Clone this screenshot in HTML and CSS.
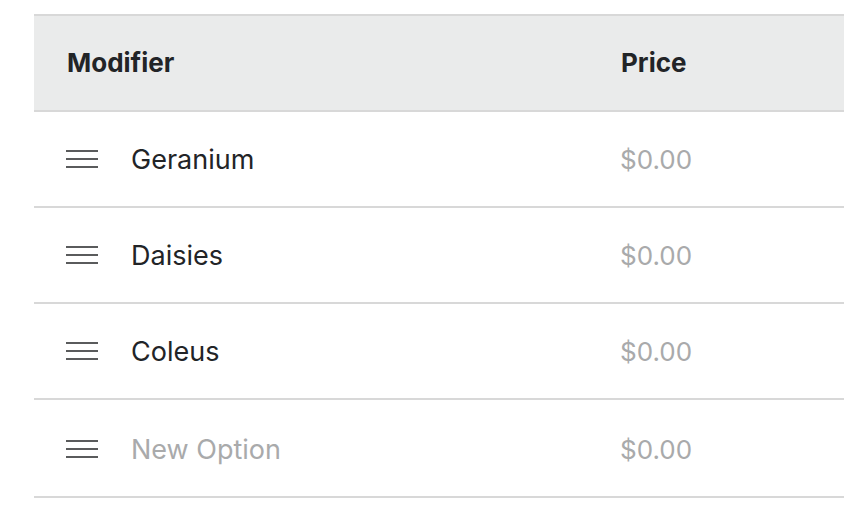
FILE: index.html
```html
<!DOCTYPE html>
<html>
<head>
<meta charset="utf-8">
<link rel="stylesheet" href="styles.css">
</head>
<body>
<div class="table">
  <div class="row head">
    <div class="cell name-h">Modifier</div>
    <div class="cell price-h">Price</div>
  </div>
  <div class="row">
    <div class="cell name"><span class="grip"><i></i><i></i><i></i></span><span class="label">Geranium</span></div>
    <div class="cell price">$0.00</div>
  </div>
  <div class="row">
    <div class="cell name"><span class="grip"><i></i><i></i><i></i></span><span class="label">Daisies</span></div>
    <div class="cell price">$0.00</div>
  </div>
  <div class="row">
    <div class="cell name"><span class="grip"><i></i><i></i><i></i></span><span class="label">Coleus</span></div>
    <div class="cell price">$0.00</div>
  </div>
  <div class="row last">
    <div class="cell name"><span class="grip"><i></i><i></i><i></i></span><span class="label placeholder">New Option</span></div>
    <div class="cell price">$0.00</div>
  </div>
</div>
</body>
</html>
```
FILE: styles.css
```css
html, body {
  margin: 0;
  padding: 0;
  background: #ffffff;
}
body {
  font-family: Inter, "Liberation Sans", sans-serif;
  color: #222427;
}
.table {
  margin: 14px 0 0 34px;
  border-top: 2px solid #d8d8d8;
}
.row {
  display: grid;
  grid-template-columns: 586px 1fr;
  height: 94px;
  border-bottom: 2px solid #d8d8d8;
  align-items: center;
}
.row.head {
  height: 94px;
  background: #eaebeb;
}
.row.last {
  height: 96px;
}
.cell {
  font-size: 26px;
  line-height: 30px;
}
.row:not(.head) .cell {
  padding-top: 2px;
}
.row.last .cell {
  padding-top: 4px;
}
.name-h, .price-h {
  font-weight: 700;
}
.name-h {
  padding-left: 33px;
}
.price-h {
  padding-left: 1px;
}
.name {
  display: flex;
  align-items: center;
  padding-left: 32px;
}
.label {
  font-size: 27px;
}
.grip {
  display: flex;
  flex-direction: column;
  gap: 6px;
  width: 32px;
  margin-right: 33px;
  margin-top: -2px;
}
.grip i {
  display: block;
  height: 2px;
  background: #5a5b5c;
}
.price {
  color: #a9aaab;
}
.placeholder {
  color: #a9aaab;
}
```
